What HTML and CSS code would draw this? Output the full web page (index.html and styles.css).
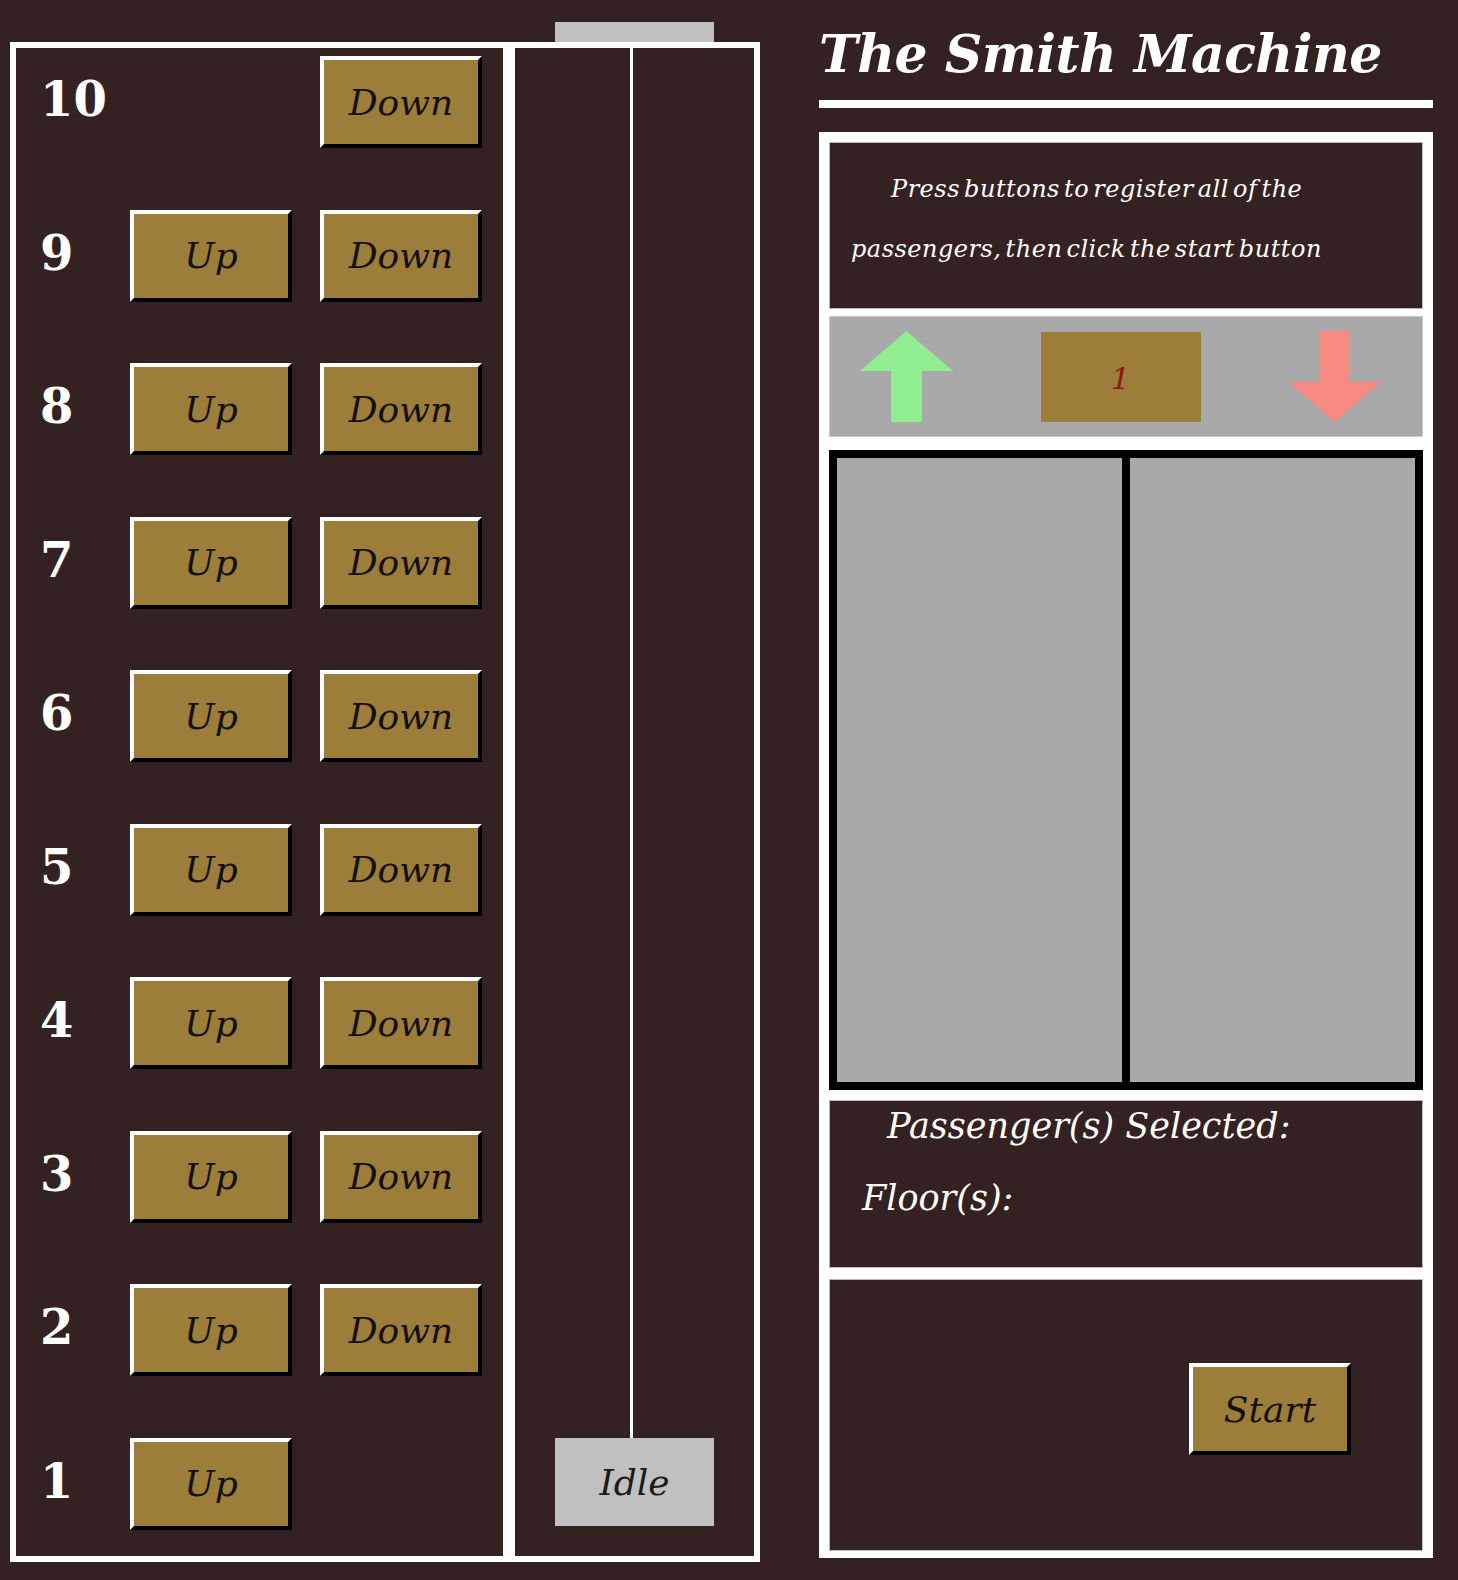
FILE: index.html
```html
<!DOCTYPE html>
<html lang="en">
<head>
<meta charset="utf-8">
<title>The Smith Machine</title>
<link rel="stylesheet" href="styles.css">
</head>
<body>
<div class="page">
  <div class="building">
    <div class="counterweight"></div>
    <div class="floors">
      <div class="floor"><span class="num">10</span><span class="btn-spacer"></span><button class="btn">Down</button></div>
      <div class="floor"><span class="num">9</span><button class="btn">Up</button><button class="btn">Down</button></div>
      <div class="floor"><span class="num">8</span><button class="btn">Up</button><button class="btn">Down</button></div>
      <div class="floor"><span class="num">7</span><button class="btn">Up</button><button class="btn">Down</button></div>
      <div class="floor"><span class="num">6</span><button class="btn">Up</button><button class="btn">Down</button></div>
      <div class="floor"><span class="num">5</span><button class="btn">Up</button><button class="btn">Down</button></div>
      <div class="floor"><span class="num">4</span><button class="btn">Up</button><button class="btn">Down</button></div>
      <div class="floor"><span class="num">3</span><button class="btn">Up</button><button class="btn">Down</button></div>
      <div class="floor"><span class="num">2</span><button class="btn">Up</button><button class="btn">Down</button></div>
      <div class="floor"><span class="num">1</span><button class="btn">Up</button></div>
    </div>
    <div class="shaft">
      <div class="cable"></div>
      <div class="car">Idle</div>
    </div>
  </div>

  <div class="control">
    <h1 class="title">The Smith Machine</h1>
    <div class="rule"></div>
    <div class="panel">
      <div class="box instructions">
        <p class="hint">Press buttons to register all of the<br>passengers, then click the start button</p>
      </div>
      <div class="indicator">
        <svg class="arrow" width="93" height="91" viewBox="0 0 93 91"><path d="M46.5 0 L93 40 L62 40 L62 91 L31 91 L31 40 L0 40 Z" fill="#90ee90"/></svg>
        <div class="current">1</div>
        <svg class="arrow" width="93" height="91" viewBox="0 0 93 91"><path d="M31 0 H62 V51 H93 L46.5 91 L0 51 H31 Z" fill="#f78a83"/></svg>
      </div>
      <div class="doors">
        <div class="door"></div>
        <div class="door"></div>
      </div>
      <div class="box info">
        <div class="info-line first">Passenger(s) Selected:</div>
        <div class="info-line">Floor(s):</div>
      </div>
      <div class="box start-box">
        <button class="btn">Start</button>
      </div>
    </div>
  </div>
</div>
</body>
</html>
```

FILE: styles.css
```css
* { box-sizing: border-box; }

body {
  margin: 0;
  background: #332221;
  font-family: "DejaVu Serif", "Liberation Serif", serif;
  color: #fff;
}

.page {
  display: flex;
  align-items: flex-start;
  gap: 59px;
  padding: 22px 0 0 10px;
}

/* ---------- building ---------- */
.building {
  display: grid;
  grid-template-columns: 499px 251px;
  grid-template-rows: 20px 1520px;
}

.counterweight {
  grid-column: 2;
  grid-row: 1;
  justify-self: center;
  width: 159px;
  height: 20px;
  background: #c0c0c0;
}

.floors {
  grid-column: 1;
  grid-row: 2;
  border: 6px solid #fff;
  display: flex;
  flex-direction: column;
  justify-content: space-between;
  padding: 8px 0 26px 0;
}

.floor {
  display: flex;
  align-items: center;
  gap: 28px;
  height: 92px;
}

.num {
  width: 86px;
  padding-left: 24px;
  font-weight: bold;
  font-size: 48px;
  line-height: 1;
  color: #fff;
  margin-top: -6px;
}

.btn-spacer {
  width: 162px;
  height: 92px;
}

.btn {
  width: 162px;
  height: 92px;
  padding: 0;
  margin: 0;
  border: 4px solid;
  border-color: #fff #000 #000 #fff;
  background: #9c7d3a;
  font-family: "DejaVu Serif", "Liberation Serif", serif;
  font-style: italic;
  font-size: 36px;
  color: #141010;
  display: flex;
  align-items: center;
  justify-content: center;
}

.shaft {
  grid-column: 2;
  grid-row: 2;
  border: 6px solid #fff;
  display: flex;
  flex-direction: column;
  align-items: center;
  padding-bottom: 30px;
}

.cable {
  flex: 1;
  width: 3px;
  margin-left: -6px;
  background: #fff;
}

.car {
  width: 159px;
  height: 88px;
  background: #c0c0c0;
  color: #1a1a1a;
  font-style: italic;
  font-size: 36px;
  display: flex;
  align-items: center;
  justify-content: center;
}

/* ---------- control panel ---------- */
.control {
  width: 614px;
  padding-top: 2px;
}

.title {
  margin: 0;
  font-size: 52px;
  letter-spacing: -0.5px;
  line-height: 60px;
  font-weight: bold;
  font-style: italic;
  color: #fff;
  white-space: nowrap;
}

.rule {
  height: 8px;
  margin-top: 16px;
  background: #fff;
}

.panel {
  margin-top: 24px;
  height: 1426px;
  background: #fff;
  padding: 10px 10px 7px 10px;
  display: flex;
  flex-direction: column;
}

.box {
  background: #332221;
  border: 1px solid #bdb8b8;
}

.instructions {
  height: 167px;
  padding: 16px 0 0 21px;
}

.hint {
  margin: 0;
  font-style: italic;
  font-size: 24px;
  line-height: 60px;
  text-indent: 40px;
  letter-spacing: 0.5px;
  word-spacing: -4px;
  color: #fff;
}

.indicator {
  margin-top: 7px;
  height: 121px;
  background: #a9a9a9;
  border: 1px solid #c9c9c9;
  display: flex;
  align-items: center;
  justify-content: space-between;
  padding: 0 41px 0 30px;
}

.arrow { display: block; }

.current {
  width: 160px;
  height: 90px;
  background: #9c7d3a;
  color: #8e1616;
  font-style: italic;
  font-size: 30px;
  padding-top: 4px;
  display: flex;
  align-items: center;
  justify-content: center;
}

.doors {
  margin-top: 13px;
  height: 640px;
  background: #000;
  padding: 8px;
  display: flex;
  gap: 8px;
}

.door {
  flex: 1;
  background: #a9a9a9;
}

.info {
  margin-top: 10px;
  height: 168px;
  padding: 3px 0 0 32px;
  display: flex;
  flex-direction: column;
  gap: 28px;
}

.info-line {
  font-style: italic;
  font-size: 35px;
  line-height: 44px;
  color: #fff;
  white-space: nowrap;
}

.info-line.first { margin-left: 25px; }

.start-box {
  margin-top: 11px;
  flex: 1;
  padding: 83px 71px 0 0;
  display: flex;
  justify-content: flex-end;
  align-items: flex-start;
}
```
